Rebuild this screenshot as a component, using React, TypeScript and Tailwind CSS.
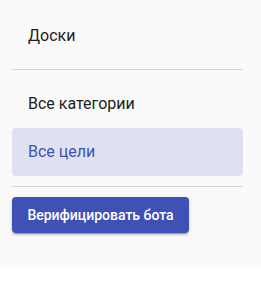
export default function App() {
  return (
    <div className="w-[261px] h-[291px] bg-white" style={{ fontFamily: "Roboto, 'Noto Sans', sans-serif" }}>
      <div className="bg-[#fafafa] pl-3 pr-[18px] pt-3 pb-8">
        <div className="h-12 flex items-center px-4 text-base text-[#212121]">Доски</div>
        <div className="h-px bg-[#d3d3d3] mt-[9px]" />
        <div className="pt-[10px] pb-2">
          <div className="h-12 flex items-center px-4 text-base text-[#212121]">Все категории</div>
          <div className="h-12 flex items-center px-4 text-base text-[#3f51b5] bg-[#dfe1f0] rounded">Все цели</div>
        </div>
        <div className="h-px bg-[#d3d3d3] mt-[2px]" />
        <button className="mt-[10px] h-9 w-[177px] rounded bg-[#3f51b5] text-white text-sm font-medium shadow-[0_3px_1px_-2px_rgba(0,0,0,0.2),0_2px_2px_0_rgba(0,0,0,0.14),0_1px_5px_0_rgba(0,0,0,0.12)]">
          Верифицировать бота
        </button>
      </div>
    </div>
  );
}
